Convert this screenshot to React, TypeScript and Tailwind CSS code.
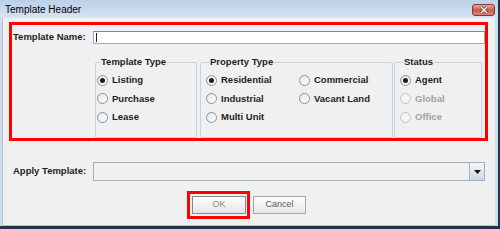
import React from 'react';

type RadioProps = { label: string; checked?: boolean; disabled?: boolean };

const Radio: React.FC<RadioProps> = ({ label, checked, disabled }) => (
  <div className="flex items-center h-[18.5px] gap-[4px]">
    <span
      className={
        disabled
          ? 'flex items-center justify-center w-[11px] h-[11px] rounded-full border border-[#b9c1ca] bg-[#f5f5f5]'
          : 'flex items-center justify-center w-[11px] h-[11px] rounded-full border border-[#8392a4] bg-gradient-to-br from-[#e2e6eb] to-[#ffffff]'
      }
    >
      {checked && <span className="w-[5px] h-[5px] rounded-full bg-[#1c1c1c]" />}
    </span>
    <span className={disabled ? 'font-bold text-[#a3a3a3]' : 'font-bold text-[#1e1e1e]'}>{label}</span>
  </div>
);

const Group: React.FC<{ title: string; className: string; children: React.ReactNode }> = ({ title, className, children }) => (
  <fieldset className={`h-[82px] border border-[#c4d3e3] rounded-[2px] ${className}`}>
    <legend className="ml-[3px] px-[1px] leading-[12px] font-bold text-[#1e1e1e]">{title}</legend>
    <div className="pt-[3px]">{children}</div>
  </fieldset>
);

export default function App() {
  return (
    <div className="w-[500px] h-[229px] flex flex-col bg-[#cddcee] border-r-[2px] border-b-[3px] border-[#1f3546] font-['Liberation_Sans',Arial,sans-serif] text-[9.5px]">
      {/* title bar */}
      <div className="h-[18px] flex items-center justify-between pl-[5px] pr-[3px] bg-gradient-to-b from-[#bcd0e8] to-[#d7e4f3]">
        <span className="text-[10px] text-black">Template Header</span>
        <div className="mt-[2px] w-[23px] h-[12px] rounded-[3px] border border-[#7a3a34] bg-gradient-to-b from-[#e7a99c] via-[#c8584d] to-[#d9887a] flex items-center justify-center">
          <svg width="10" height="8" viewBox="0 0 10 8">
            <path d="M2 1 L8 7 M8 1 L2 7" stroke="#5a2520" strokeWidth="2.6" />
            <path d="M2 1 L8 7 M8 1 L2 7" stroke="#ffffff" strokeWidth="1.6" />
          </svg>
        </div>
      </div>

      {/* body */}
      <div className="flex-1 ml-[2px] mr-[3px] bg-[#f0f0f0] border-l border-[#b8c4dc] border-b border-b-[#7fd3ee] pl-[6px] pr-[7px] pt-[4px]">
        <div className="border-[3px] border-[#ff0000] pt-[6px]">
          <div className="flex items-center h-[13px]">
            <span className="w-[81px] pl-[1px] font-bold text-[#1e1e1e]">Template Name:</span>
            <div className="flex-1 h-[13px] bg-white border border-[#9eaab6] border-t-[#7e8a97] flex items-center pl-[2px]">
              <span className="w-[1px] h-[9px] bg-[#222]" />
            </div>
          </div>

          <div className="flex ml-[83px] mt-[12px]">
            <Group title="Template Type" className="w-[102px] pl-[1px]">
              <Radio label="Listing" checked />
              <Radio label="Purchase" />
              <Radio label="Lease" />
            </Group>
            <Group title="Property Type" className="w-[193px] ml-[3px] pl-[5px]">
              <div className="grid grid-cols-[93px_auto]">
                <Radio label="Residential" checked />
                <Radio label="Commercial" />
                <Radio label="Industrial" />
                <Radio label="Vacant Land" />
                <Radio label="Multi Unit" />
              </div>
            </Group>
            <Group title="Status" className="w-[88px] ml-[1px] pl-[5px]">
              <Radio label="Agent" checked />
              <Radio label="Global" disabled />
              <Radio label="Office" disabled />
            </Group>
          </div>
        </div>

        <div className="flex items-center mt-[21px] pl-[4px] pr-[3px]">
          <span className="w-[80px] font-bold text-[#1e1e1e]">Apply Template:</span>
          <div className="flex-1 h-[19px] flex border border-[#a3b0be] bg-[#eef0f2]">
            <div className="flex-1" />
            <div className="w-[15px] border-l border-[#a3b0be] bg-gradient-to-b from-[#f5f8fb] to-[#c8d7e9] flex items-center justify-center">
              <svg width="7" height="4" viewBox="0 0 7 4">
                <polygon points="0,0 7,0 3.5,4" fill="#111" />
              </svg>
            </div>
          </div>
        </div>

        <div className="flex items-center mt-[10px] ml-[178px]">
          <div className="border-[3px] border-[#ff0000] pl-[2px] pr-[1px] py-[2px]">
            <div className="w-[54px] h-[18px] border border-[#7d8a98] bg-gradient-to-b from-[#ffffff] to-[#e4e4e4] flex items-center justify-center text-[9px] text-[#8a8a8a]">
              OK
            </div>
          </div>
          <div className="ml-[3px] w-[53px] h-[18px] border border-[#a6a6a6] bg-gradient-to-b from-[#ffffff] to-[#e6e6e6] flex items-center justify-center text-[9px] text-[#5a5a5a]">
            Cancel
          </div>
        </div>
      </div>
    </div>
  );
}
